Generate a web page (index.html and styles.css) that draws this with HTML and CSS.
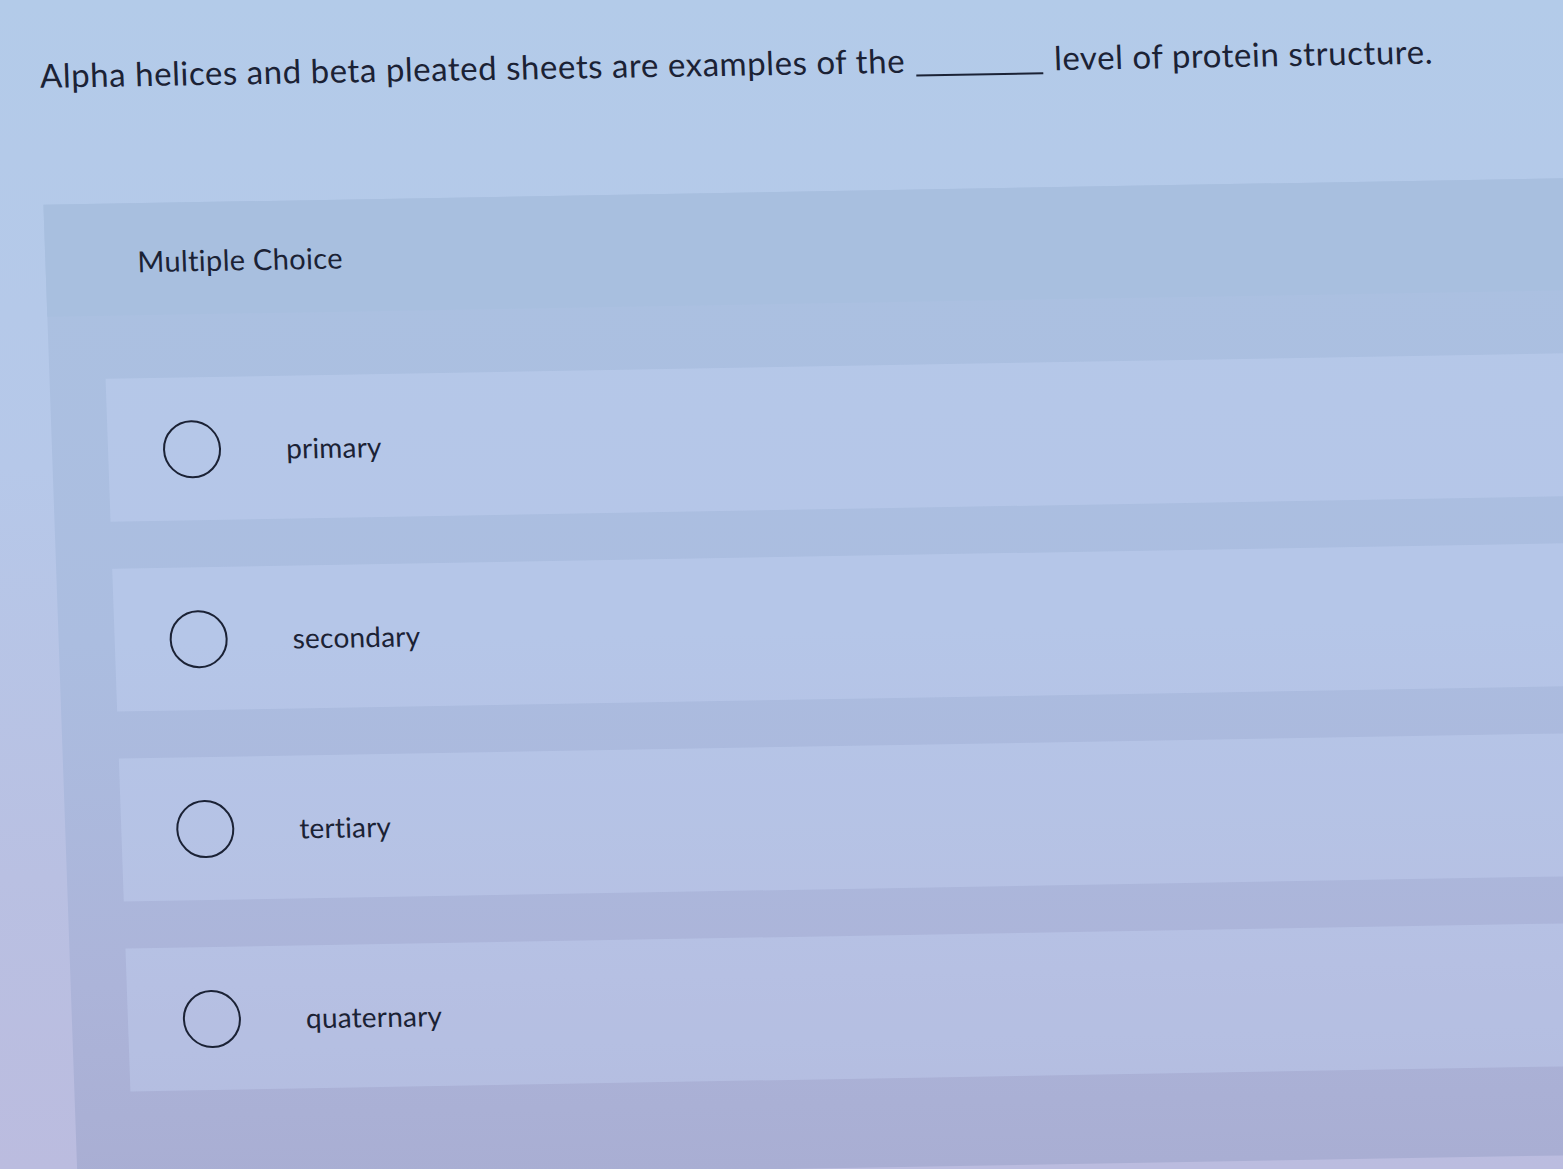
FILE: index.html
```html
<!DOCTYPE html>
<html lang="en">
<head>
<meta charset="utf-8">
<title>Multiple Choice</title>
<link rel="stylesheet" href="styles.css">
</head>
<body>
<div class="stage">
  <p class="question">Alpha helices and beta pleated sheets are examples of the <span class="blank"></span> level of protein structure.</p>
  <section class="panel">
    <div class="panel-header">Multiple Choice</div>
    <div class="options">
      <label class="option"><span class="radio"></span><span class="label">primary</span></label>
      <label class="option"><span class="radio"></span><span class="label">secondary</span></label>
      <label class="option"><span class="radio"></span><span class="label">tertiary</span></label>
      <label class="option"><span class="radio"></span><span class="label">quaternary</span></label>
    </div>
  </section>
</div>
</body>
</html>
```

FILE: styles.css
```css
html, body {
  margin: 0;
  padding: 0;
  width: 1563px;
  height: 1169px;
  overflow: hidden;
  background: linear-gradient(180deg, #b3cbe9 0%, #b6c8e9 40%, #b9c0e2 75%, #bbbcdf 100%);
}

.stage {
  width: 1563px;
  height: 1169px;
  font-family: Lato, "Open Sans", sans-serif;
  color: #1b2235;
  transform-origin: 781px 584px;
  transform: rotate(-1deg) skewX(1deg);
  display: flex;
  flex-direction: column;
}

.question {
  margin: 42px 0 0 58px;
  font-size: 33px;
  line-height: 40px;
  white-space: nowrap;
  letter-spacing: 0.55px;
}

.blank {
  display: inline-block;
  width: 127px;
  border-bottom: 2px solid #1b2235;
  margin: 0 2px;
  vertical-align: -4px;
}

.panel {
  margin: 110px 0 0 57px;
  width: 1600px;
  flex: 1;
  background: linear-gradient(180deg, #abc1e1 0%, #abbde0 45%, #acb4d9 80%, #a9aed3 100%);
  display: flex;
  flex-direction: column;
}

.panel-header {
  height: 112px;
  box-sizing: border-box;
  padding: 41px 0 0 92px;
  font-size: 29px;
  line-height: 34px;
  letter-spacing: 0.3px;
  background: #a8bfdf;
}

.options {
  display: flex;
  flex-direction: column;
  gap: 47px;
  padding: 63px 0 0 56px;
}

.option {
  height: 143px;
  display: flex;
  align-items: center;
  padding-left: 55px;
  background: rgba(200, 215, 245, 0.35);
}

.radio {
  width: 54px;
  height: 54px;
  border: 2.5px solid #1b2235;
  border-radius: 50%;
  flex: none;
}

.label {
  margin-left: 65px;
  font-size: 28px;
  line-height: 34px;
  letter-spacing: 0.2px;
}
```
